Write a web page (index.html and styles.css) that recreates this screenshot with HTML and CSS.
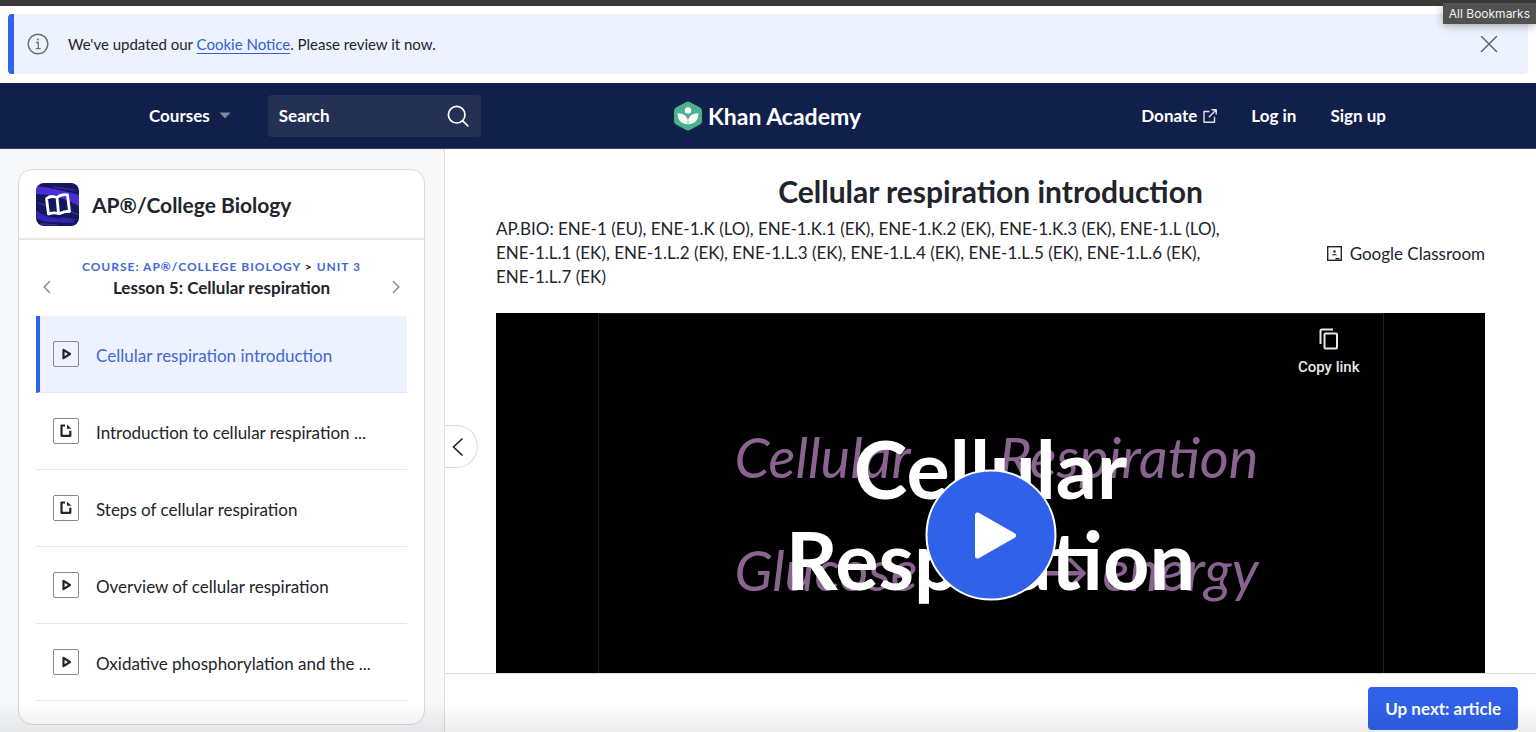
FILE: index.html
```
<!DOCTYPE html>
<html lang="en">
<head>
  <meta charset="UTF-8" />
  <meta name="viewport" content="width=device-width, initial-scale=1.0" />
  <title>Cellular respiration introduction | Khan Academy</title>
  <link rel="stylesheet" href="styles.css">
</head>
<body>
  <div class="browser-edge"></div>
  <div class="tooltip">All Bookmarks</div>

  <div class="notice">
    <svg class="notice-icon" viewBox="0 0 22 22" width="22" height="22" fill="none" stroke="#6b6f7a" stroke-width="1.5">
      <circle cx="11" cy="11" r="9.8" />
      <path d="M9 9.5h2.3v6M8.8 15.6h5" stroke-width="1.3" />
      <circle cx="10.9" cy="6.4" r="1" fill="#6b6f7a" stroke="none" />
    </svg>
    <p class="notice-text">We've updated our <a href="#">Cookie Notice</a>. Please review it now.</p>
    <button class="notice-close" aria-label="Close">
      <svg viewBox="0 0 18 18" width="18" height="18" fill="none" stroke="#5f6370" stroke-width="1.5" stroke-linecap="round">
        <path d="M1.5 1.5l15 15M16.5 1.5l-15 15" />
      </svg>
    </button>
  </div>

  <header class="header">
    <div class="header-left">
      <button class="courses">Courses
        <svg viewBox="0 0 12 7" width="12" height="7"><path d="M.5.5h11L6 6.5z" fill="#7e879f" /></svg>
      </button>
      <div class="search">
        <input type="search" placeholder="Search" aria-label="Search" />
        <svg viewBox="0 0 22 22" width="22" height="22" fill="none" stroke="#fff" stroke-width="1.7" stroke-linecap="round">
          <circle cx="9.7" cy="9.7" r="8.3" />
          <path d="M15.8 15.8l5 5" />
        </svg>
      </div>
    </div>
    <a class="logo" href="#">
      <svg viewBox="0 0 28 30" width="28" height="30">
        <path d="M12.2.9Q14-.1 15.8.9L26 6.6Q28 7.7 28 10v10q0 2.300-2 3.400l-10.200 5.700q-1.800 1-3.600 0L2 23.400Q0 22.300 0 20V10Q0 7.700 2 6.600z" fill="#4fb08c" />
        <circle cx="14" cy="9.400" r="3.200" fill="#fff" />
        <path d="M3.600 12.200c5.400-.3 9.300 2.600 10.400 7.300 1.100-4.700 5-7.600 10.400-7.300.1 6.800-4 11-10.400 11S3.500 19 3.600 12.200z" fill="#fff" />
        <path d="M14 19.500v3.700" stroke="#4fb08c" stroke-width=".8" />
      </svg>
      <span>Khan Academy</span>
    </a>
    <nav class="header-right">
      <a href="#">Donate
        <svg viewBox="0 0 14 14" width="14" height="14" fill="none" stroke="#dfe2ea" stroke-width="1.400" stroke-linejoin="round">
          <path d="M6.500 2.500H1v10.800h10.500V7.800M8.500.8h4.700v4.700M13 1L5.800 8.200" />
        </svg>
      </a>
      <a href="#">Log in</a>
      <a href="#">Sign up</a>
    </nav>
  </header>

  <div class="page">
    <aside class="sidebar">
      <div class="card">
        <div class="card-header">
          <svg class="course-icon" viewBox="0 0 43 43" width="43" height="43">
            <clipPath id="tile"><rect width="43" height="43" rx="8" /></clipPath>
            <g clip-path="url(#tile)">
              <rect width="43" height="43" fill="#13175b" />
              <path d="M0 3q18 2 43 9v11Q22 11 0 11z" fill="#4a2fd6" />
              <path d="M0 27q8 7 20 8l18 3v2l-24-1Q4 38 0 35z" fill="#3324b3" />
              <path d="M2 20l9 3M25 35l14 2M4 41l17 1M31 27l12 5M17 4l22 3" stroke="#3526ad" stroke-width="1.500" />
            </g>
            <path d="M10.500 15.500q4-3 8.500-1.500l2 .5q4-3.500 10.500-2.700l2 16.700q-5-.5-9 1.800l-2.500.2q-4-1.500-9.500.5zM21 14.500l1.500 16" fill="none" stroke="#fff" stroke-width="2.800" stroke-linejoin="round" />
          </svg>
          <h2>AP®/College Biology</h2>
        </div>
        <div class="lesson">
          <button class="lesson-arrow" aria-label="Previous lesson">
            <svg viewBox="0 0 8 14" width="8" height="14"><path d="M7 1L1.200 7 7 13" /></svg>
          </button>
          <div class="lesson-title">
            <div class="crumbs"><a href="#">Course: AP®/College Biology</a> &gt; <a href="#">Unit 3</a></div>
            <h3>Lesson 5: Cellular respiration</h3>
          </div>
          <button class="lesson-arrow" aria-label="Next lesson">
            <svg viewBox="0 0 8 14" width="8" height="14"><path d="M1 1l5.800 6L1 13" /></svg>
          </button>
        </div>
        <ul class="items">
          <li class="item active">
            <svg class="item-icon" viewBox="0 0 26 26" width="26" height="26"><rect x=".5" y=".5" width="25" height="25" rx="1.500" /><path d="M10.500 8.800v8.400l6.500-4.200z" /></svg>
            <a href="#">Cellular respiration introduction</a>
          </li>
          <li class="item">
            <svg class="item-icon" viewBox="0 0 26 26" width="26" height="26"><rect x=".5" y=".5" width="25" height="25" rx="1.500" /><path d="M12 7.500H8.500v10.300h8.800v-5" /><path class="fold" d="M14 6.500l4.300 4.300H14z" /></svg>
            <a href="#">Introduction to cellular respiration ...</a>
          </li>
          <li class="item">
            <svg class="item-icon" viewBox="0 0 26 26" width="26" height="26"><rect x=".5" y=".5" width="25" height="25" rx="1.500" /><path d="M12 7.500H8.500v10.300h8.800v-5" /><path class="fold" d="M14 6.500l4.300 4.300H14z" /></svg>
            <a href="#">Steps of cellular respiration</a>
          </li>
          <li class="item">
            <svg class="item-icon" viewBox="0 0 26 26" width="26" height="26"><rect x=".5" y=".5" width="25" height="25" rx="1.500" /><path d="M10.500 8.800v8.400l6.500-4.200z" /></svg>
            <a href="#">Overview of cellular respiration</a>
          </li>
          <li class="item">
            <svg class="item-icon" viewBox="0 0 26 26" width="26" height="26"><rect x=".5" y=".5" width="25" height="25" rx="1.500" /><path d="M10.500 8.800v8.400l6.500-4.200z" /></svg>
            <a href="#">Oxidative phosphorylation and the ...</a>
          </li>
        </ul>
      </div>
    </aside>

    <main class="main">
      <button class="collapse" aria-label="Hide sidebar">
        <svg viewBox="0 0 11 18" width="11" height="18" fill="none" stroke="#21242c" stroke-width="1.700" stroke-linecap="round"><path d="M10 1L1.500 9l8.500 8" /></svg>
      </button>
      <div class="content">
        <h1>Cellular respiration introduction</h1>
        <div class="meta">
          <p class="standards">AP.BIO: ENE-1 (EU), ENE-1.K (LO), ENE-1.K.1 (EK), ENE-1.K.2 (EK), ENE-1.K.3 (EK), ENE-1.L (LO), ENE-1.L.1 (EK), ENE-1.L.2 (EK), ENE-1.L.3 (EK), ENE-1.L.4 (EK), ENE-1.L.5 (EK), ENE-1.L.6 (EK), ENE-1.L.7 (EK)</p>
          <button class="classroom">
            <svg viewBox="0 0 15 15" width="15" height="15">
              <rect x=".700" y=".700" width="13.600" height="13.600" fill="none" stroke="#21242c" stroke-width="1.400" />
              <circle cx="7.500" cy="5.500" r="1.200" fill="#21242c" />
              <path d="M4.500 9.200q3-2.600 6 0zM8.500 12h4v1.500h-4z" fill="#21242c" />
            </svg>
            Google Classroom
          </button>
        </div>
        <div class="video">
          <div class="frame">
            <div class="scribble">
              <span>Cellular</span><span>Respiration</span>
            </div>
            <div class="scribble">
              <span>Glucose</span><span>→ energy</span>
            </div>
            <div class="video-title">Cellular<br>Respiration</div>
            <button class="copy-link">
              <svg viewBox="0 0 20 22" width="20" height="22" fill="none" stroke="#e8e8e8" stroke-width="2">
                <path d="M1.500 16V3q0-1.500 1.500-1.500h11" />
                <rect x="5.500" y="5.500" width="12.500" height="15" rx="1" />
              </svg>
              Copy link
            </button>
            <button class="play" aria-label="Play video">
              <svg viewBox="0 0 42 48" width="42" height="48"><path d="M3 3.500v41L39 24z" fill="#fff" stroke="#fff" stroke-width="5" stroke-linejoin="round" /></svg>
            </button>
          </div>
        </div>
      </div>
      <footer class="footer">
        <button class="next">Up next: article</button>
      </footer>
    </main>
  </div>
</body>
</html>
```
FILE: styles.css
```
* {
  box-sizing: border-box;
}
body {
  margin: 0;
  height: 100vh;
  display: flex;
  flex-direction: column;
  overflow: hidden;
  font-family: Lato, sans-serif;
  font-size: 17px;
  color: #21242c;
  background-color: #fff;
}
body::after {
  content: "";
  position: fixed;
  left: 0;
  right: 0;
  bottom: 0;
  height: 30px;
  background: linear-gradient(rgba(0,0,0,0), rgba(0,0,0,0.07));
  pointer-events: none;
}
h1, h2, h3, p, ul {
  margin: 0;
  padding: 0;
}
a {
  color: inherit;
  text-decoration: none;
}
button {
  font: inherit;
  color: inherit;
  padding: 0;
  border: none;
  background: none;
  cursor: pointer;
}
svg {
  display: block;
  flex-shrink: 0;
}
.browser-edge {
  flex-shrink: 0;
  height: 6px;
  background-color: #3b3a3b;
}
.tooltip {
  position: absolute;
  top: 3px;
  right: 0;
  padding: 0 6px;
  font-family: Inter, sans-serif;
  font-size: 12px;
  line-height: 21px;
  color: #f0f0f0;
  background-color: #50524f;
  box-shadow: 0 2px 8px rgba(0,0,0,0.3);
}

/* cookie notice */
.notice {
  display: flex;
  align-items: center;
  flex-shrink: 0;
  height: 60px;
  margin: 8px 8px 9px;
  padding: 0 30px 0 13px;
  border-left: 6px solid #2f62e8;
  border-radius: 4px;
  background-color: #edf2fe;
}
.notice-text {
  flex: 1;
  margin-left: 19px;
  font-size: 15px;
}
.notice-text a {
  color: #2f62d8;
  text-decoration: underline;
  text-underline-offset: 3px;
}

/* top navigation */
.header {
  display: grid;
  grid-template-columns: 1fr auto 1fr;
  align-items: center;
  flex-shrink: 0;
  height: 66px;
  padding: 0 150px 0 149px;
  color: #fff;
  font-weight: bold;
  background-color: #11204a;
  border-bottom: 1px solid #3c4560;
}
.header-left {
  display: flex;
  align-items: center;
  gap: 37px;
}
.courses {
  display: flex;
  align-items: center;
  gap: 9px;
}
.search {
  display: flex;
  align-items: center;
  width: 213px;
  height: 42px;
  padding: 0 12px 0 11px;
  border-radius: 4px;
  background-color: #253154;
}
.search input {
  flex: 1;
  min-width: 0;
  padding: 0;
  border: none;
  outline: none;
  font: inherit;
  color: #fff;
  background: none;
}
.search input::placeholder {
  color: #fff;
  opacity: 1;
}
.logo {
  display: flex;
  align-items: center;
  gap: 6px;
  font-size: 23px;
}
.header-right {
  display: flex;
  justify-content: flex-end;
  gap: 34px;
}
.header-right a {
  display: flex;
  align-items: center;
  gap: 6px;
}

.page {
  flex: 1;
  min-height: 0;
  display: grid;
  grid-template-columns: 445px 1fr;
}

/* lesson sidebar */
.sidebar {
  min-height: 0;
  padding: 20px 19px 7px 18px;
  background-color: #f6f8fa;
  border-right: 1px solid #dadce2;
}
.card {
  height: 100%;
  overflow: hidden;
  border: 1px solid #d9dbe0;
  border-radius: 14px;
  background-color: #fff;
}
.card-header {
  display: flex;
  align-items: center;
  gap: 13px;
  height: 70px;
  padding: 0 17px;
  border-bottom: 2px solid #e6e7ea;
}
.card-header h2 {
  font-size: 21px;
}
.lesson {
  display: flex;
  justify-content: space-between;
  align-items: flex-end;
  height: 76px;
  padding: 17px 24px 16px;
}
.lesson-title {
  align-self: flex-start;
  text-align: center;
}
.crumbs {
  font-size: 12px;
  font-weight: bold;
  line-height: 20px;
  letter-spacing: 1px;
  text-transform: uppercase;
}
.crumbs a {
  color: #4268d6;
}
.lesson h3 {
  font-size: 17px;
  line-height: 22px;
}
.lesson-arrow {
  padding: 6px 0;
}
.lesson-arrow path {
  fill: none;
  stroke: #8b8d93;
  stroke-width: 1.5;
}
.items {
  list-style: none;
  margin: 0 17px;
}
.item {
  display: flex;
  align-items: center;
  gap: 17px;
  height: 77px;
  padding: 0 17px;
  border-bottom: 1px solid #e6e7ea;
}
.item a {
  padding-top: 3px;
}
.item.active {
  padding-left: 13px;
  border-left: 4px solid #2f62e8;
  color: #4268d6;
  background-color: #edf2fe;
}
.item-icon {
  fill: none;
  stroke: #21242c;
  stroke-width: 2.2;
  stroke-linejoin: round;
}
.item-icon rect {
  stroke: #85878d;
  stroke-width: 1;
}
.item-icon .fold {
  fill: #21242c;
  stroke: none;
}

/* main column */
.main {
  position: relative;
  display: flex;
  flex-direction: column;
  min-width: 0;
  min-height: 0;
}
.collapse {
  position: absolute;
  left: 0;
  top: 276px;
  width: 33px;
  height: 43px;
  padding-left: 7px;
  border: 1px solid #dadce2;
  border-left: none;
  border-radius: 0 22px 22px 0;
  background-color: #fff;
}
.content {
  flex: 1;
  min-height: 0;
  overflow: hidden;
  padding: 24px 51px 0;
}
h1 {
  font-size: 30px;
  line-height: 36px;
  text-align: center;
}
.meta {
  display: flex;
  align-items: center;
  justify-content: space-between;
  margin-top: 8px;
}
.standards {
  width: 75%;
  line-height: 24px;
}
.classroom {
  display: flex;
  align-items: center;
  gap: 8px;
}
.video {
  margin-top: 24px;
  background-color: #000;
}
.frame {
  position: relative;
  display: flex;
  flex-direction: column;
  gap: 37px;
  max-width: 786px;
  height: 444px;
  margin: 0 auto;
  padding-top: 105px;
  border: 1px solid #222;
}
.scribble {
  display: flex;
  justify-content: space-between;
  padding: 0 124px 0 136px;
  font-size: 56px;
  font-style: italic;
  line-height: 76px;
  color: #8a6391;
}
.video-title {
  position: absolute;
  left: 0;
  right: 0;
  top: 108px;
  font-size: 81px;
  font-weight: bold;
  line-height: 91px;
  text-align: center;
  color: #fff;
}
.copy-link {
  position: absolute;
  top: 14px;
  right: 23px;
  display: flex;
  flex-direction: column;
  align-items: center;
  gap: 8px;
  font-family: Roboto, sans-serif;
  font-size: 15px;
  font-weight: 500;
  color: #e8e8e8;
}
.play {
  position: absolute;
  left: 50%;
  top: 50%;
  display: flex;
  align-items: center;
  justify-content: center;
  width: 131px;
  height: 131px;
  padding-left: 10px;
  border: 2px solid #fff;
  border-radius: 50%;
  background-color: #2f62e8;
  transform: translate(-50%, -50%);
}
.footer {
  display: flex;
  justify-content: flex-end;
  flex-shrink: 0;
  padding: 13px 18px 2px;
  border-top: 1px solid #dadce2;
  background-color: #fff;
}
.next {
  height: 43px;
  padding: 0 17px;
  border-radius: 4px;
  font-weight: bold;
  color: #fff;
  background-color: #2f62e8;
}
```
